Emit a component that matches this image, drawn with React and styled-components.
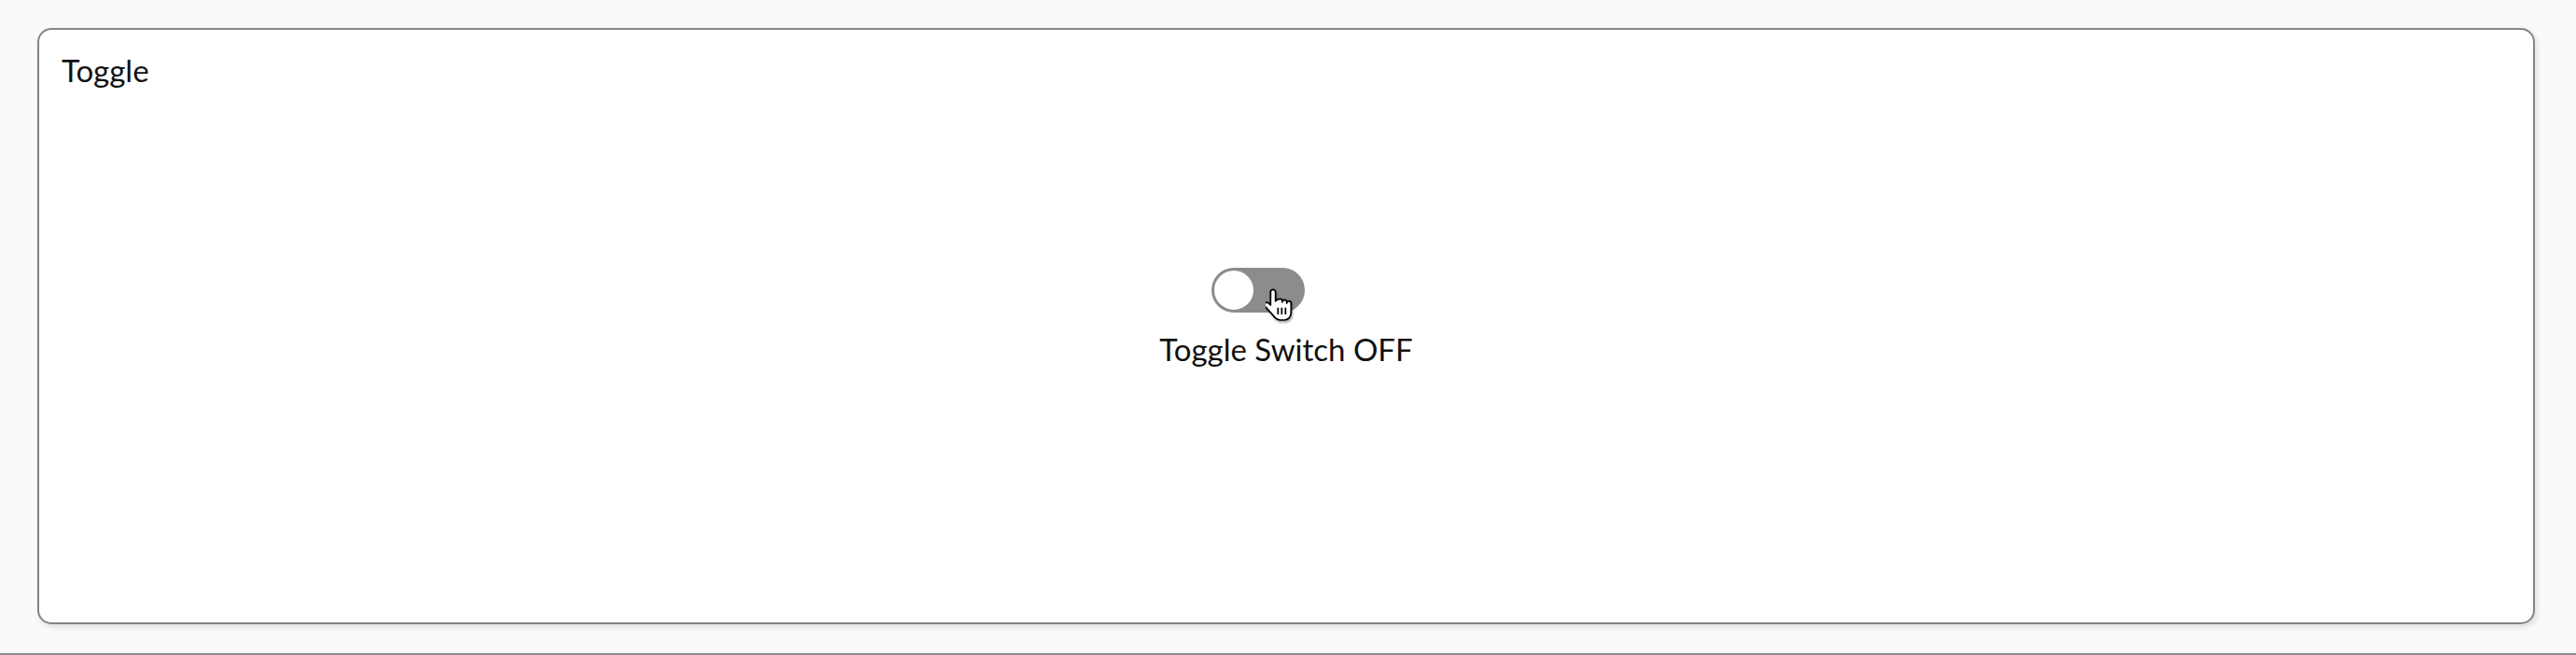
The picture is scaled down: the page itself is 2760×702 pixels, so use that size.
import styled, { createGlobalStyle } from "styled-components";

const GlobalStyle = createGlobalStyle`
  html, body {
    margin: 0;
    padding: 0;
    background: #fafafa;
  }
  body {
    font-family: Lato, "Noto Sans", sans-serif;
    color: #111;
  }
`;

const Page = styled.div`
  box-sizing: border-box;
  height: 702px;
  padding: 30px 44px 31px 40px;
  border-bottom: 2px solid #8a8a8a;
  display: flex;
`;

const Card = styled.section`
  box-sizing: border-box;
  flex: 1;
  display: flex;
  flex-direction: column;
  background: #fff;
  border: 2px solid #858585;
  border-radius: 15px;
  box-shadow: 2px 3px 6px rgba(0, 0, 0, 0.12);
  padding: 23px 24px 16px;
`;

const Title = styled.h2`
  margin: 0;
  font-size: 33px;
  font-weight: 400;
  line-height: 40px;
`;

const Body = styled.div`
  flex: 1;
  display: flex;
  flex-direction: column;
  align-items: center;
  justify-content: center;
  padding-bottom: 66px;
`;

const Track = styled.button`
  position: relative;
  box-sizing: border-box;
  width: 100px;
  height: 48px;
  margin-right: 60px;
  padding: 0;
  border: none;
  border-radius: 24px;
  background: ${(p) => (p.$on ? "#2f9e44" : "#8c8c8c")};
  cursor: pointer;
`;

const Knob = styled.span`
  position: absolute;
  top: 1px;
  left: ${(p) => (p.$on ? "53px" : "1px")};
  box-sizing: border-box;
  width: 46px;
  height: 46px;
  border-radius: 50%;
  background: #fff;
  border: 2px solid #8c8c8c;
`;

const Label = styled.div`
  margin-top: 19px;
  font-size: 33px;
  line-height: 40px;
`;

const Pointer = styled.svg`
  position: absolute;
  left: 58px;
  top: 21px;
  width: 32px;
  height: 38px;
  pointer-events: none;
  filter: drop-shadow(1px 2px 1px rgba(0, 0, 0, 0.35));
`;

function HandCursor() {
  return (
    <Pointer viewBox="0 0 24 28">
      <path
        d="M6 1.5c-1.1 0-2 .9-2 2v10.5l-1.6-1.6c-.8-.8-2-.8-2.7 0-.7.7-.7 1.9 0 2.7L5 21c1.5 2.2 3.4 5 6.5 5h3.5c3.3 0 5.5-2.7 5.5-6V12.5c0-1-.8-1.8-1.8-1.8s-1.7.8-1.7 1.8v-1c0-1-.8-1.8-1.8-1.8s-1.7.8-1.7 1.8v-.6c0-1-.8-1.8-1.8-1.8S8 9.9 8 10.9V3.5c0-1.1-.9-2-2-2z"
        fill="#fff"
        stroke="#000"
        strokeWidth="1.3"
        strokeLinejoin="round"
      />
      <path d="M10 16v5.5M13 16v5.5M16 16v5.5" stroke="#000" strokeWidth="1.3" />
    </Pointer>
  );
}

export default function App() {
  const on = false;
  return (
    <>
      <GlobalStyle />
      <Page>
        <Card>
          <Title>Toggle</Title>
          <Body>
            <Track $on={on} aria-label="Toggle switch">
              <Knob $on={on} />
              <HandCursor />
            </Track>
            <Label>Toggle Switch {on ? "ON" : "OFF"}</Label>
          </Body>
        </Card>
      </Page>
    </>
  );
}
